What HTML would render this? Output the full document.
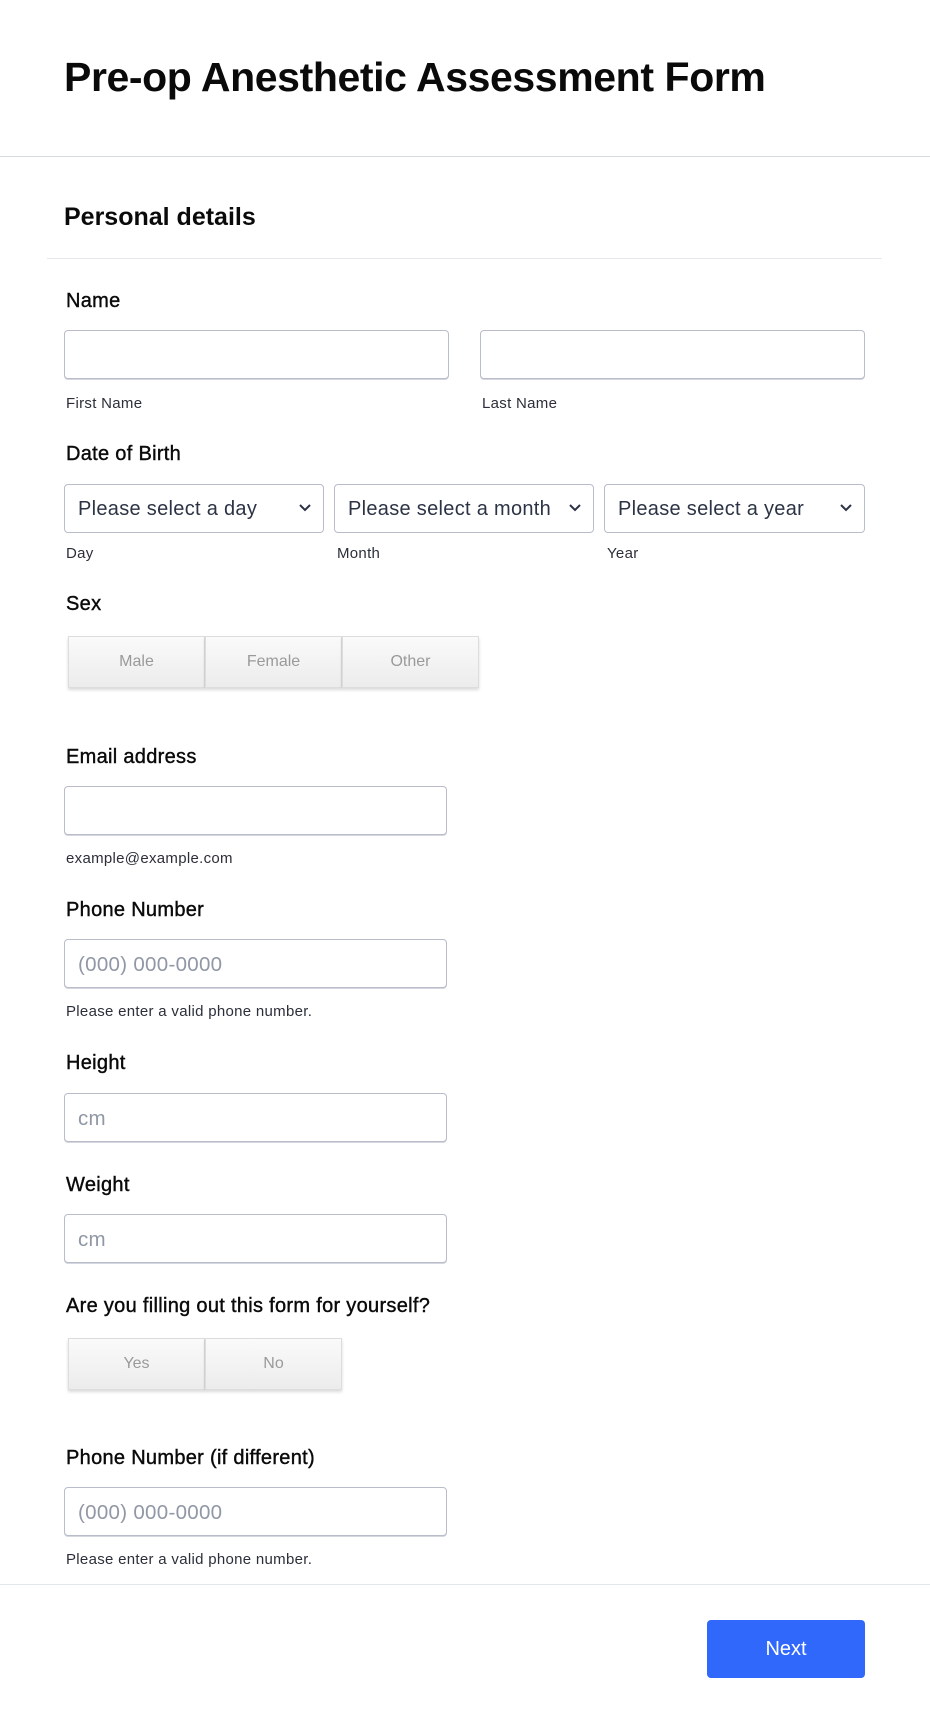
<!DOCTYPE html>
<html><head><meta charset="utf-8"><style>
*{box-sizing:border-box;margin:0;padding:0}
body{width:930px;height:1713px;background:#fff;font-family:"Liberation Sans",sans-serif;color:#0a0a0a;position:relative;overflow:hidden}
.a{position:absolute}
h1{position:absolute;left:64px;top:54px;font-size:41px;font-weight:bold;letter-spacing:-0.4px}
.hr{position:absolute;height:1px;background:#d8dae3}
.lbl{position:absolute;left:66px;font-size:20px;color:#0a0a0a;line-height:22px;-webkit-text-stroke:0.4px #0a0a0a;letter-spacing:0.3px}
.sub{position:absolute;font-size:15px;color:#2c2f3a;line-height:16px;letter-spacing:0.3px}
.in{position:absolute;border:1px solid #b8bdc9;border-radius:4px;background:#fff;height:49px;box-shadow:0 1px 0 #d4d7df}
.ph{position:absolute;left:13px;top:13px;font-size:20.5px;color:#9097a5;letter-spacing:0.3px}
.sel{position:absolute;border:1px solid #b8bdc9;border-radius:4px;height:49px;top:484px}
.sel span{position:absolute;left:13px;top:13px;font-size:20px;color:#2c3345;letter-spacing:0.3px}
.sel svg{position:absolute;right:12px;top:19px}
.btn{position:absolute;height:52px;width:137px;border:1px solid #ddd;background:linear-gradient(#fafafa,#ececec);box-shadow:0 2px 3px rgba(0,0,0,.15);color:#9a9a9a;font-size:16px;text-align:center;line-height:50px}
</style></head><body>
<h1>Pre-op Anesthetic Assessment Form</h1>
<div class="hr" style="left:0;top:156px;width:930px"></div>
<div class="a" style="left:64px;top:203px;font-size:25px;font-weight:bold">Personal details</div>
<div class="hr" style="left:47px;top:258px;width:835px;background:#e8e9ee"></div>

<div class="lbl" style="top:290px">Name</div>
<div class="in" style="left:64px;top:330px;width:385px"></div>
<div class="in" style="left:480px;top:330px;width:385px"></div>
<div class="sub" style="left:66px;top:396px">First Name</div>
<div class="sub" style="left:482px;top:396px">Last Name</div>

<div class="lbl" style="top:443px">Date of Birth</div>
<div class="sel" style="left:64px;width:260px"><span>Please select a day</span><svg width="12" height="8"><path d="M1 1l5 5 5-5" stroke="#2c3345" stroke-width="2" fill="none"/></svg></div>
<div class="sel" style="left:334px;width:260px"><span>Please select a month</span><svg width="12" height="8"><path d="M1 1l5 5 5-5" stroke="#2c3345" stroke-width="2" fill="none"/></svg></div>
<div class="sel" style="left:604px;width:261px"><span>Please select a year</span><svg width="12" height="8"><path d="M1 1l5 5 5-5" stroke="#2c3345" stroke-width="2" fill="none"/></svg></div>
<div class="sub" style="left:66px;top:546px">Day</div>
<div class="sub" style="left:337px;top:546px">Month</div>
<div class="sub" style="left:607px;top:546px">Year</div>

<div class="lbl" style="top:593px">Sex</div>
<div class="btn" style="left:68px;top:636px">Male</div>
<div class="btn" style="left:205px;top:636px">Female</div>
<div class="btn" style="left:342px;top:636px">Other</div>

<div class="lbl" style="top:746px">Email address</div>
<div class="in" style="left:64px;top:786px;width:383px"></div>
<div class="sub" style="left:66px;top:851px">example@example.com</div>

<div class="lbl" style="top:899px">Phone Number</div>
<div class="in" style="left:64px;top:939px;width:383px"><div class="ph">(000) 000-0000</div></div>
<div class="sub" style="left:66px;top:1004px">Please enter a valid phone number.</div>

<div class="lbl" style="top:1052px">Height</div>
<div class="in" style="left:64px;top:1093px;width:383px"><div class="ph">cm</div></div>

<div class="lbl" style="top:1174px">Weight</div>
<div class="in" style="left:64px;top:1214px;width:383px"><div class="ph">cm</div></div>

<div class="lbl" style="top:1295px">Are you filling out this form for yourself?</div>
<div class="btn" style="left:68px;top:1338px">Yes</div>
<div class="btn" style="left:205px;top:1338px">No</div>

<div class="lbl" style="top:1447px">Phone Number (if different)</div>
<div class="in" style="left:64px;top:1487px;width:383px"><div class="ph">(000) 000-0000</div></div>
<div class="sub" style="left:66px;top:1552px">Please enter a valid phone number.</div>

<div class="hr" style="left:0;top:1584px;width:930px;background:#e3e5ec"></div>
<div class="a" style="left:707px;top:1620px;width:158px;height:58px;background:#3068fc;border-radius:4px;color:#fff;font-size:20px;text-align:center;line-height:58px">Next</div>
</body></html>
